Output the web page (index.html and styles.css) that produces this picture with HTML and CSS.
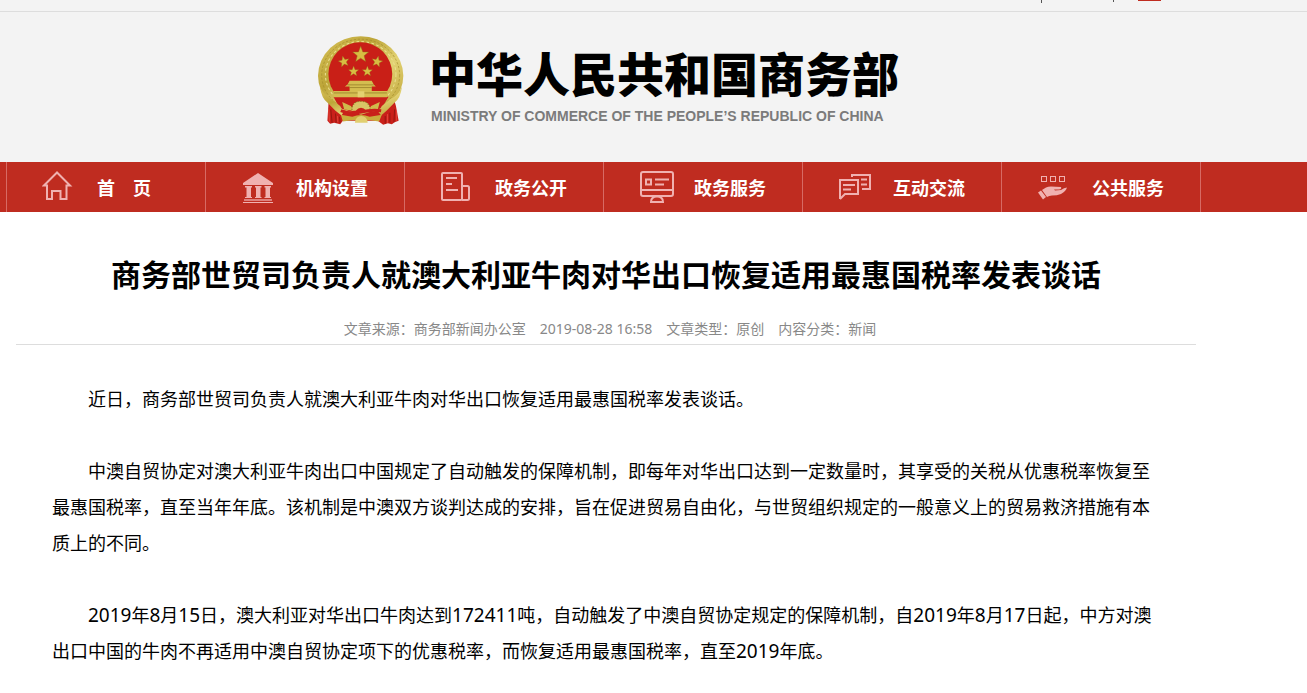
FILE: index.html
```html
<!DOCTYPE html>
<html lang="zh-CN">
<head>
<meta charset="utf-8">
<title>中华人民共和国商务部</title>
<link rel="stylesheet" href="styles.css">
</head>
<body>
<div class="topbar">
  <span class="tick"></span><span class="tick tick-short"></span><span class="badge"></span>
</div>
<header class="header">
  <svg class="emblem" viewBox="24 16 256 268" aria-hidden="true">
    <defs>
      <linearGradient id="gold" x1="0" y1="0" x2="1" y2="1">
        <stop offset="0" stop-color="#d9c45a"/><stop offset=".35" stop-color="#bda538"/>
        <stop offset=".6" stop-color="#e3d374"/><stop offset="1" stop-color="#b89c2c"/>
      </linearGradient>
      <path id="star" d="M0-10 2.600-3.200 9.500-3.100 4.100 1.300 5.900 8.100 0 4.200-5.900 8.100-4.100 1.300-9.500-3.100-2.600-3.200Z"/>
    </defs>
    <ellipse cx="151" cy="136" rx="127" ry="118" fill="url(#gold)"/>
    <ellipse cx="151" cy="134" rx="116" ry="107" fill="none" stroke="#a18b2c" stroke-width="2" stroke-dasharray="7 5"/>
    <ellipse cx="151" cy="132" rx="105" ry="98" fill="none" stroke="#ecdf90" stroke-width="3" stroke-dasharray="8 7"/>
    <circle cx="150" cy="131" r="95" fill="#c91f17"/>
    <path fill="#c9201a" d="M56 206 92 238 128 244 152 252 178 244 212 238 250 206 256 226 264 270 252 274 244 280 232 277 218 282 202 270H98L90 280 72 276 60 279 52 270Z"/>
    <path fill="#c9201a" d="M70 198H234L214 232 176 244H126L88 232Z"/>
    <g fill="#d8bd42" stroke="#8e6d18" stroke-width=".5">
      <use href="#star" transform="translate(151 73) scale(2.500)"/>
      <use href="#star" transform="translate(101 94) rotate(-12) scale(1.700)"/>
      <use href="#star" transform="translate(200 94) rotate(12) scale(1.700)"/>
      <use href="#star" transform="translate(130 123) scale(1.600)"/>
      <use href="#star" transform="translate(171 123) scale(1.600)"/>
    </g>
    <path fill="#d4bd50" d="M118 151H184L190 162 196 168H184V181H230V200H70V181H118V168H104L112 162Z"/>
    <path stroke="#8d7522" stroke-width="2" fill="none" d="M112 163H190M118 171H184M71 187H229"/>
    <path fill="#e4d270" d="M142 182H162V200H142Z"/>
    <path fill="url(#gold)" d="M30 168Q40 194 64 205L90 226 100 244 94 254 76 240 54 218Q34 204 30 168ZM274 168Q264 194 240 205L214 226 204 244 212 254 228 240 250 218Q270 204 274 168Z"/>
    <path fill="#d0ba4c" d="M96 214 122 226 130 240 102 236ZM208 214 182 226 174 240 202 236Z"/>
    <path fill="#d8c566" d="M124 240Q124 212 152 212T180 240H168Q152 222 136 240Z"/>
    <path fill="none" stroke="#8d7522" stroke-width="3" stroke-dasharray="4 4" d="M125 238Q126 212 152 212T179 238"/>
    <path fill="#c9ac3c" d="M92 252 126 258Q152 248 178 258L214 252 206 272 180 268H124L98 272Z"/>
    <path fill="#e1cf70" d="M134 276Q136 256 153 256T172 276Z"/>
    <path fill="none" stroke="#c9201a" stroke-width="9" d="M92 240Q120 252 152 244T212 240"/>
    <path fill="none" stroke="#971811" stroke-width="3" d="M62 236 66 276M76 248 78 276M88 258 90 276M252 236 250 274M238 246 238 276M224 256 224 278"/>
    <path fill="none" stroke="#ed5748" stroke-width="2" d="M56 236 58 272M82 256 83 274M258 240 258 270M231 250 231 276"/>
  </svg>
  <div class="brand">
    <div class="brand-cn">中华人民共和国商务部</div>
    <div class="brand-en">MINISTRY OF COMMERCE OF THE PEOPLE’S REPUBLIC OF CHINA</div>
  </div>
</header>
<nav class="nav">
  <a class="nav-item" href="#">
    <svg class="icon" viewBox="0 0 36 36"><path d="M15 3.500 2 16.500H5V30H10V22H18.500V30H24.500V16.500H28Z"/></svg>首　页</a>
  <a class="nav-item" href="#">
    <svg class="icon solid" viewBox="0 0 36 36"><path d="M17 4 32 14V16H2V14ZM4 17H11V18.500H10V28H11V29H4V28H5.500V18.500H4ZM14 17H20.500V18.500H19.500V28H20.500V29H14V28H15V18.500H14ZM23.500 17H30V18.500H29V28H30V29H23.500V28H24.500V18.500H23.500Z"/><path d="M3 30H31V32H3Z" opacity=".65"/><path d="M2 33H32V34H2Z"/></svg>机构设置</a>
  <a class="nav-item" href="#">
    <svg class="icon" viewBox="0 0 36 36"><rect x="2" y="4" width="20" height="27" rx="1"/><path d="M22 17H27.500Q29 17 29 18.500V29.500Q29 31 27.500 31H22M6 9H17M6 15H12M6 21H18"/></svg>政务公开</a>
  <a class="nav-item" href="#">
    <svg class="icon" viewBox="0 0 36 36"><rect x="2" y="3" width="32" height="24" rx="2"/><path d="M2 21H34M7 10.500H12V15.500H7ZM16 10.500H30M16 15.500H25M12 33H24Q24 27.500 18 27.500T12 33Z"/></svg>政务服务</a>
  <a class="nav-item" href="#">
    <svg class="icon" viewBox="0 0 36 36"><path d="M14 8V6H32V20H24M2 30V11H20V25H7L2 30M5 16H17M5 20.500H13M23 10.500H29M23 15.500H29"/></svg>互动交流</a>
  <a class="nav-item" href="#">
    <svg class="icon solid" viewBox="0 0 36 36"><path fill-rule="evenodd" d="M4 7H10V13H4ZM5 8V12H9V8ZM13 7H19V13H13ZM14 8V12H18V8ZM22 7H28V13H22ZM23 8V12H27V8Z"/><path d="M1 23.500 4 21.500 9 28 6 30.500ZM5 21 9 18.500Q11 17.500 14 17.500L24 18Q25 20 22 20.500H17L18 21.500 24 21Q27 18.500 30 18.500 29 22 24 25 20 26.500 15 26.500 12 26.500 10 28Z"/></svg>公共服务</a>
</nav>
<main class="article">
  <h1 class="title">商务部世贸司负责人就澳大利亚牛肉对华出口恢复适用最惠国税率发表谈话</h1>
  <div class="meta">
    <span>文章来源：商务部新闻办公室</span>
    <span>2019-08-28 16:58</span>
    <span>文章类型：原创</span>
    <span>内容分类：新闻</span>
  </div>
  <div class="content">
    <p>近日，商务部世贸司负责人就澳大利亚牛肉对华出口恢复适用最惠国税率发表谈话。</p>
    <p>中澳自贸协定对澳大利亚牛肉出口中国规定了自动触发的保障机制，即每年对华出口达到一定数量时，其享受的关税从优惠税率恢复至最惠国税率，直至当年年底。该机制是中澳双方谈判达成的安排，旨在促进贸易自由化，与世贸组织规定的一般意义上的贸易救济措施有本质上的不同。</p>
    <p><span class="num">2019</span>年<span class="num">8</span>月<span class="num">15</span>日，澳大利亚对华出口牛肉达到<span class="num">172411</span>吨，自动触发了中澳自贸协定规定的保障机制，自<span class="num">2019</span>年<span class="num">8</span>月<span class="num">17</span>日起，中方对澳出口中国的牛肉不再适用中澳自贸协定项下的优惠税率，而恢复适用最惠国税率，直至<span class="num">2019</span>年底。</p>
  </div>
</main>
</body>
</html>
```
FILE: styles.css
```css
* { box-sizing: border-box; }
body {
  margin: 0;
  background: #fff;
  color: #000;
  font-family: "Noto Sans", "Noto Sans CJK SC", sans-serif;
}
.topbar {
  display: flex;
  align-items: flex-start;
  height: 12px;
  padding-left: 1041px;
  background: #f3f3f3;
  border-bottom: 1px solid #ddd;
}
.tick { width: 1px; height: 3px; margin-right: 71px; background: #555; }
.tick-short { height: 2px; margin-right: 24px; }
.badge { width: 23px; height: 1px; background: #bf2c20; }
.header {
  display: flex;
  align-items: flex-start;
  gap: 25px;
  height: 150px;
  padding: 23px 0 0 318px;
  background: #f3f3f3;
}
.emblem { width: 86px; height: 91px; flex: none; }
.brand { white-space: nowrap; padding-top: 9px; }
.brand-cn {
  font-family: "Noto Sans CJK SC", sans-serif;
  font-size: 47px;
  font-weight: 900;
  line-height: 56px;
}
.brand-en {
  padding-left: 2px;
  margin-top: 7px;
  font-family: "Liberation Sans", Arial, sans-serif;
  font-size: 14px;
  font-weight: 700;
  line-height: 18px;
  color: #7b7b7b;
}
.nav {
  display: flex;
  height: 50px;
  padding-left: 6px;
  background: #bf2c20;
}
.nav-item {
  display: flex;
  align-items: center;
  gap: 19px;
  width: 199px;
  padding-left: 35px;
  border-left: 1px solid #d76a64;
  color: #fff;
  font-size: 18px;
  font-weight: 700;
  text-decoration: none;
  white-space: nowrap;
}
.nav-item:last-child { width: 200px; border-right: 1px solid #d76a64; }
.icon {
  width: 36px;
  height: 36px;
  flex: none;
  fill: none;
  stroke: #f0b1b0;
  stroke-width: 2;
}
.icon.solid { fill: #f0b1b0; stroke: none; }
.article { max-width: 1180px; margin-left: 16px; }
.title {
  margin: 0;
  padding-top: 39px;
  font-size: 30px;
  font-weight: 700;
  line-height: 48px;
  text-align: center;
}
.meta {
  display: flex;
  justify-content: center;
  gap: 14px;
  margin-top: 18px;
  padding: 0 0 3px 8px;
  border-bottom: 1px solid #ddd;
  color: #888;
  font-size: 14px;
  line-height: 24px;
}
.content { padding: 36px 36px 0; }
.content p {
  margin: 0 0 36px;
  font-size: 18px;
  line-height: 36px;
  text-indent: 36px;
}
.content p:last-child { margin-bottom: 0; }
.num { font-size: 19px; line-height: 1; }
```
